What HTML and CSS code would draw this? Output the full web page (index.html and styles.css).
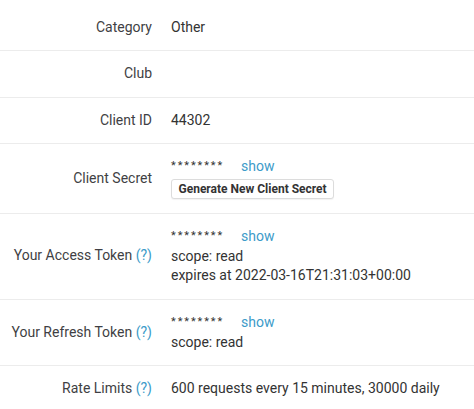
FILE: index.html
```html
<!DOCTYPE html>
<html lang="en">
<head>
<meta charset="utf-8">
<title>My API Application</title>
<link rel="stylesheet" href="styles.css">
</head>
<body>
<div class="settings">
  <div class="row first">
    <div class="label">Category</div>
    <div class="value">Other</div>
  </div>
  <div class="row">
    <div class="label">Club</div>
    <div class="value"></div>
  </div>
  <div class="row">
    <div class="label">Client ID</div>
    <div class="value">44302</div>
  </div>
  <div class="row">
    <div class="label">Client Secret</div>
    <div class="value">
      <div class="secret"><span class="stars">********</span><a class="show" href="#">show</a></div>
      <button class="btn" type="button">Generate New Client Secret</button>
    </div>
  </div>
  <div class="row">
    <div class="label">Your Access Token <a class="help" href="#">(?)</a></div>
    <div class="value">
      <div class="secret"><span class="stars">********</span><a class="show" href="#">show</a></div>
      <div>scope: read</div>
      <div>expires at 2022-03-16T21:31:03+00:00</div>
    </div>
  </div>
  <div class="row">
    <div class="label">Your Refresh Token <a class="help" href="#">(?)</a></div>
    <div class="value">
      <div class="secret"><span class="stars">********</span><a class="show" href="#">show</a></div>
      <div>scope: read</div>
    </div>
  </div>
  <div class="row last">
    <div class="label">Rate Limits <a class="help" href="#">(?)</a></div>
    <div class="value">600 requests every 15 minutes, 30000 daily</div>
  </div>
</div>
</body>
</html>
```
FILE: styles.css
```css
html, body {
  margin: 0;
  padding: 0;
  background: #fff;
}
body {
  font-family: Roboto, "Liberation Sans", Arial, sans-serif;
  font-size: 14px;
  line-height: 19.25px;
  color: #3f3f44;
}
.settings {
  padding-top: 4.5px;
}
.row {
  display: grid;
  grid-template-columns: 152px 1fr;
  column-gap: 19px;
  align-items: center;
  padding: 13px 0 13.25px;
  border-bottom: 1px solid #ececec;
  min-height: 19.25px;
}
.row.last {
  border-bottom: none;
}
.label {
  text-align: right;
  white-space: nowrap;
}
.value {
  color: #333;
}
.secret {
  display: flex;
  align-items: baseline;
}
.stars {
  font-size: 11px;
  letter-spacing: 1.9px;
  width: 70px;
  position: relative;
  top: -2px;
}
a {
  text-decoration: none;
}
.show {
  color: #3c9bc9;
}
.help {
  color: #3c9bc9;
}
.btn {
  display: block;
  margin-top: 2px;
  height: 20px;
  padding: 0 6.5px;
  font-family: inherit;
  font-size: 12px;
  font-weight: 700;
  color: #333;
  background: #fff;
  border: 1px solid #dcdcdc;
  border-radius: 3px;
  box-shadow: 0 1px 1px rgba(0,0,0,0.05);
}
```
